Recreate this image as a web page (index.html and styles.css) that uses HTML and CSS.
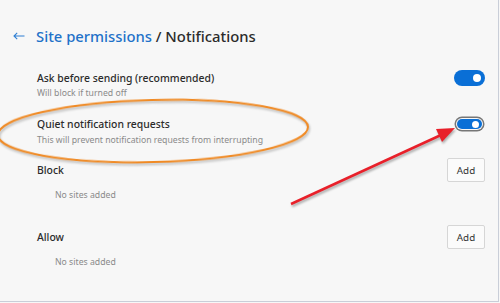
FILE: index.html
```html
<!DOCTYPE html>
<html lang="en">
<head>
    <meta charset="UTF-8">
    <meta name="viewport" content="width=device-width, initial-scale=1.0">
    <title>Site permissions / Notifications</title>
    <link rel="stylesheet" href="styles.css">
</head>
<body>

    <div class="page">

        <div class="header">
            <svg class="back" width="12" height="8" viewBox="0 0 12 8">
                <path d="M11.5 4H1M4.2 0.8L1 4l3.2 3.2"/>
            </svg>
            <h1 class="title"><span class="crumb">Site permissions</span> / Notifications</h1>
        </div>

        <!-- toggle settings -->
        <div class="setting first">
            <div>
                <div class="setting-name">Ask before sending (recommended)</div>
                <div class="setting-desc">Will block if turned off</div>
            </div>
            <span class="toggle"><span class="knob"></span></span>
        </div>

        <div class="setting second">
            <div>
                <div class="setting-name">Quiet notification requests</div>
                <div class="setting-desc">This will prevent notification requests from interrupting</div>
            </div>
            <span class="toggle focused"><span class="knob"></span></span>
        </div>

        <!-- site lists -->
        <div class="section block">
            <div class="section-head">
                <span class="section-name">Block</span>
                <button class="add">Add</button>
            </div>
            <div class="empty">No sites added</div>
        </div>

        <div class="section allow">
            <div class="section-head">
                <span class="section-name">Allow</span>
                <button class="add">Add</button>
            </div>
            <div class="empty">No sites added</div>
        </div>

        <!-- annotations drawn over the page -->
        <svg class="marks" width="499" height="302" viewBox="0 0 499 302">
            <ellipse class="ring" cx="153" cy="131" rx="155" ry="31" transform="rotate(-1.5 153 131)"/>
            <g class="arrow">
                <line x1="291" y1="204" x2="441" y2="135"/>
                <polygon points="455,128 442,142 436,129"/>
            </g>
        </svg>
    </div>

</body>
</html>
```

FILE: styles.css
```css
body {
    margin: 0;
    background-color: #f7f7f7;
    font-family: "Noto Sans", "Open Sans", sans-serif;
    color: #2b2b2b;
}

.page {
    position: relative;
    width: 499px;
    height: 302px;
    box-sizing: border-box;
    border-right: 1px solid #c9ced8;
    border-bottom: 1px solid #c9ced8;
    padding: 24px 13px 0 37px;
    overflow: hidden;
}

.header {
    display: flex;
    align-items: center;
    height: 24px;
    margin-left: -24px;
}

.back {
    margin-right: 11px;
    fill: none;
    stroke: #2f7fd3;
    stroke-width: 1.1;
}

.title {
    margin: 0;
    font-size: 14.8px;
    font-weight: 500;
    line-height: 24px;
    color: #2b2b2b;
}

.crumb {
    color: #1f72c9;
}

.setting {
    display: flex;
    justify-content: space-between;
    align-items: flex-start;
}

.setting.first {
    margin-top: 22px;
}

.setting.second {
    margin-top: 16px;
}

.setting-name {
    font-size: 10.4px;
    font-weight: 500;
    line-height: 16px;
}

.setting-desc {
    margin-top: 0;
    font-size: 8.7px;
    line-height: 14px;
    color: #8a8a8a;
}

.setting.second .setting-desc {
    margin-top: 1px;
}

.toggle {
    position: relative;
    width: 31px;
    height: 16px;
    border-radius: 8px;
    background-color: #0a6fd6;
    box-sizing: border-box;
}

.knob {
    position: absolute;
    right: 4px;
    top: 4px;
    width: 8px;
    height: 8px;
    border-radius: 50%;
    background-color: #fff;
}

.toggle.focused {
    width: 25px;
    height: 10px;
    margin: 3px 3px 0 0;
    box-shadow: 0 0 0 1px #f7f7f7, 0 0 0 2.5px #777;
}

.toggle.focused .knob {
    right: 3px;
    top: 1.5px;
    width: 7px;
    height: 7px;
}

.section-head {
    display: flex;
    justify-content: space-between;
    align-items: center;
    height: 24px;
}

.section.block {
    margin-top: 11px;
}

.section.allow {
    margin-top: 23px;
}

.section-name {
    font-size: 10.4px;
    font-weight: 500;
}

.add {
    width: 38px;
    height: 24px;
    padding: 0;
    background-color: #fbfbfb;
    border: 1px solid #d6d6d6;
    border-radius: 2px;
    font-family: inherit;
    font-size: 9.8px;
    color: #333;
}

.empty {
    margin-top: 6px;
    padding-left: 18px;
    font-size: 8.7px;
    line-height: 14px;
    color: #8a8a8a;
}

.marks {
    position: absolute;
    left: 0;
    top: 0;
    pointer-events: none;
}

.ring {
    fill: none;
    stroke: #f08a24;
    stroke-width: 2;
    filter: drop-shadow(1px 2px 1px rgba(0, 0, 0, 0.25));
}

.arrow line {
    stroke: #e8202a;
    stroke-width: 2.5;
}

.arrow polygon {
    fill: #e8202a;
}

.arrow {
    filter: drop-shadow(1px 2px 1px rgba(0, 0, 0, 0.3));
}
```
